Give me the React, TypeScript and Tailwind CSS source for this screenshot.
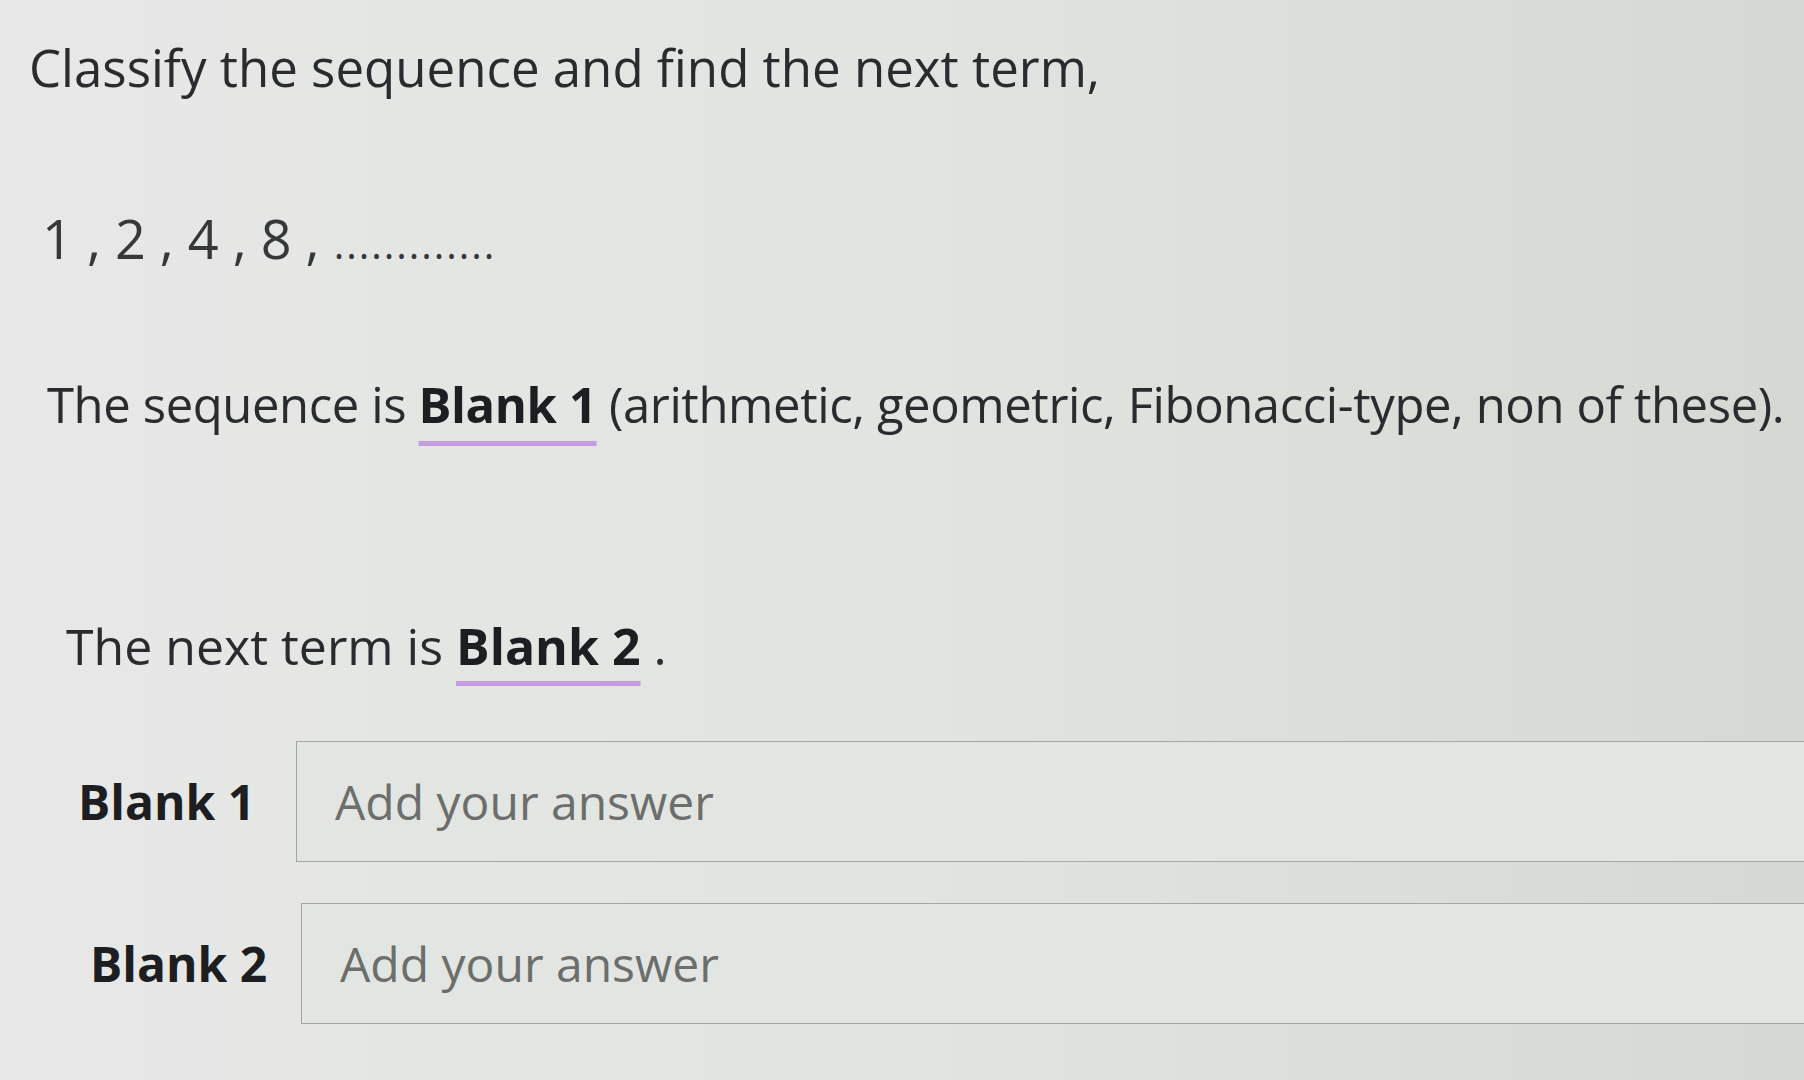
import { useState } from "react";

const BlankRow = ({ label, pad, labelW }: { label: string; pad: string; labelW: string }) => {
  const [value, setValue] = useState("");
  return (
    <div className={`flex items-center ${pad}`}>
      <div className={`${labelW} shrink-0 text-[48px] font-bold leading-none text-[#1d1e21]`}>{label}</div>
      <input
        value={value}
        onChange={(e) => setValue(e.target.value)}
        placeholder="Add your answer"
        className="h-[121px] flex-1 -mr-10 border-[1.5px] border-[#a3a6a1] bg-[#e3e5e2] pl-[38px] text-[48px] text-[#2a2b2d] outline-none placeholder:text-[#6c6e6b]"
      />
    </div>
  );
};

const App = () => {
  return (
    <div
      className="h-[1080px] w-full overflow-hidden bg-linear-to-r from-[#e7e8e7] via-[#e1e4e0] to-[#d5d9d3] text-[#2a2b2e]"
      style={{ fontFamily: '"Open Sans", "Noto Sans", sans-serif' }}
    >
      <div className="flex flex-col pt-[42px]">
        <div className="pl-[29px] text-[51px] leading-none">Classify the sequence and find the next term,</div>

        <div className="mt-[118px] pl-[42px] text-[54px] leading-none text-[#37383a]">
          1 , 2 , 4 , 8 , <span className="text-[40px] tracking-[2px]">.............</span>
        </div>

        <div className="mt-[115px] pl-[47px] text-[49px] leading-none tracking-[-0.4px] whitespace-nowrap">
          The sequence is{" "}
          <span className="font-bold text-[#1d1e21] underline decoration-[#c49de0] decoration-[5px] underline-offset-[18px]">
            Blank 1
          </span>{" "}
          (arithmetic, geometric, Fibonacci-type, non of these).
        </div>

        <div className="mt-[192px] pl-[66px] text-[50px] leading-none">
          The next term is{" "}
          <span className="font-bold text-[#1d1e21] underline decoration-[#c49de0] decoration-[5px] underline-offset-[16px]">
            Blank 2
          </span>{" "}
          .
        </div>

        <div className="mt-[70px] flex flex-col gap-[41px]">
          <BlankRow label="Blank 1" pad="pl-[78px]" labelW="w-[218px]" />
          <BlankRow label="Blank 2" pad="pl-[90px]" labelW="w-[211px]" />
        </div>
      </div>
    </div>
  );
};

export default App;
